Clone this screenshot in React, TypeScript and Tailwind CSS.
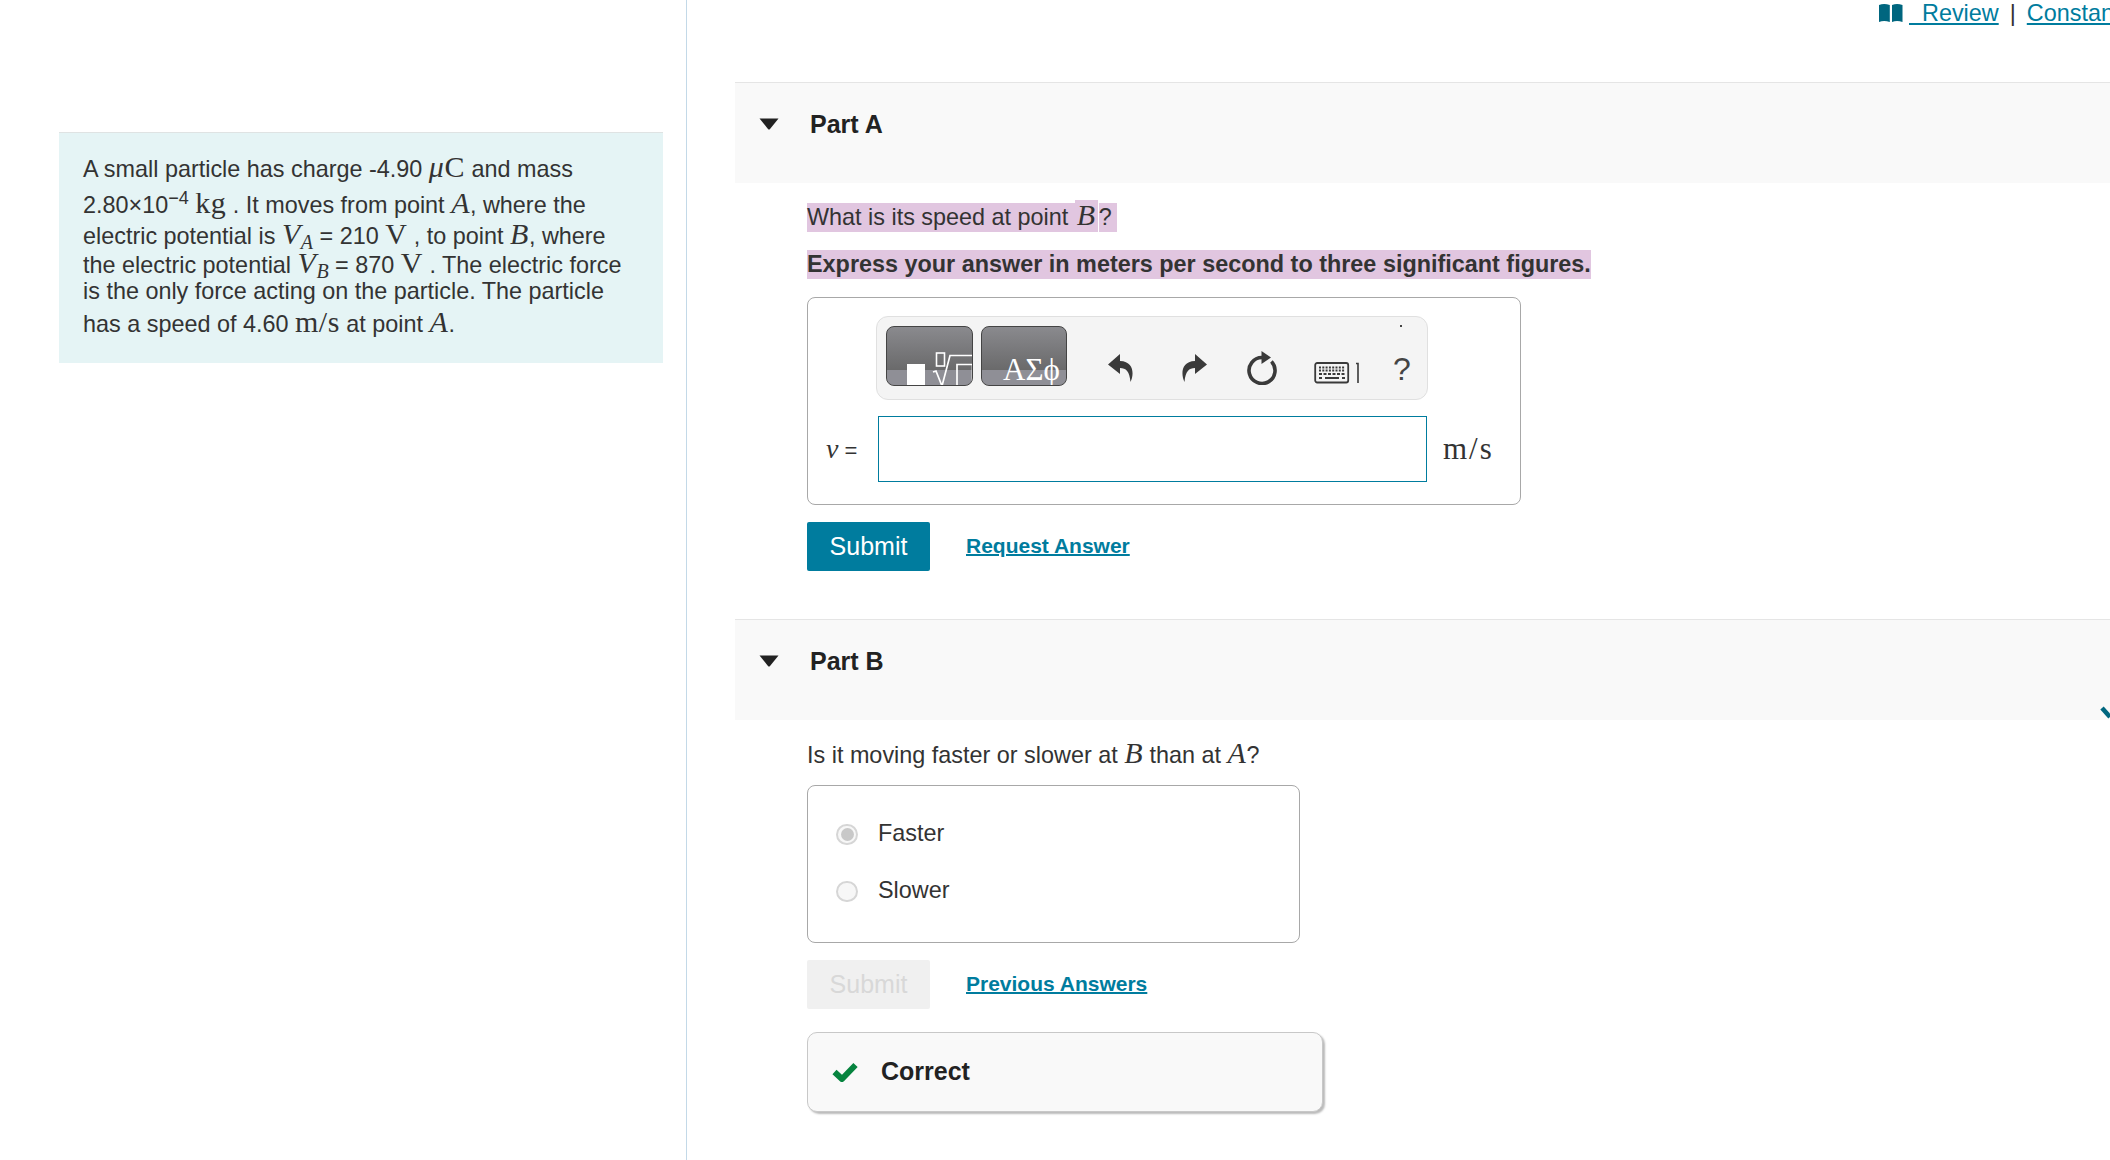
const sans = "font-['Liberation_Sans',Arial,sans-serif]";

// Math is typeset in a serif face, like the original page
const M = ({ children }: { children: React.ReactNode }) => (
  <span className="font-['Liberation_Serif',serif] italic text-[30px] leading-none tracking-[0.5px]">{children}</span>
);
const U = ({ children }: { children: React.ReactNode }) => (
  <span className="font-['Liberation_Serif',serif] text-[30px] leading-none tracking-[0.5px]">{children}</span>
);

const Triangle = () => (
  <svg width="20" height="12" viewBox="0 0 20 12" className="shrink-0">
    <path d="M0.5 0.5 H19.5 L11 11 Q10 12 9 11 Z" fill="#222" />
  </svg>
);

const PartHeader = ({ title }: { title: string }) => (
  <div className="h-[101px] bg-[#f9f9f9] border-t border-[#e5e5e5] flex items-start pl-[24px] pt-[33px] gap-[31px]">
    <div className="pt-[2px]">
      <Triangle />
    </div>
    <h2 className="text-[25px] leading-[14px] pt-[1px] font-bold text-[#222]">{title}</h2>
  </div>
);

const PaletteSymbols = () => (
  <svg width="87" height="60" viewBox="0 0 87 60" className="absolute left-0 top-0">
    <rect x="20" y="37" width="18" height="23" fill="#fff" />
    <rect x="49.5" y="26" width="8" height="13" fill="none" stroke="#fff" strokeWidth="1.6" />
    <path d="M46 45 L49 44 L55 59 L63 28.5 H87" fill="none" stroke="#fff" strokeWidth="1.7" />
    <path d="M70 60 V37.5 H85.5 V60" fill="none" stroke="#fff" strokeWidth="1.7" />
  </svg>
);

const Palette = ({ wide, children }: { wide?: boolean; children: React.ReactNode }) => (
  <div
    className={`relative h-[60px] ${wide ? "w-[87px]" : "w-[86px]"} rounded-[8px] border border-[#444] overflow-hidden bg-gradient-to-b from-[#8a8a8e] to-[#5f5f5f]`}
  >
    <div className="absolute left-0 right-0 bottom-0 h-[15px] bg-[#8f8f96]" />
    {children}
  </div>
);

const UndoIcon = ({ flip }: { flip?: boolean }) => (
  <svg width="26" height="30" viewBox="0 0 26 30" className={flip ? "-scale-x-100" : ""}>
    <path
      d="M12 1 L0 11.5 L12 21 V15 C18 15 21.5 18 22.5 29 C26 22 26.5 8.5 12 8 Z"
      fill="#3a3a3a"
    />
  </svg>
);

const ResetIcon = () => (
  <svg width="32" height="34" viewBox="0 0 32 34">
    <path d="M16 6.5 A13 13 0 1 0 25.4 10.5" fill="none" stroke="#3a3a3a" strokeWidth="3.6" />
    <path d="M15.5 0 L25 6.5 L15.5 13 Z" fill="#3a3a3a" />
  </svg>
);

const KeyboardIcon = () => (
  <svg width="48" height="24" viewBox="0 0 48 24">
    <rect x="1.2" y="2" width="33" height="19.5" rx="2" fill="#f4f4f4" stroke="#3a3a3a" strokeWidth="1.8" />
    <path
      d="M5 6.5 H31 M5 9.5 H31"
      stroke="#3a3a3a"
      strokeWidth="2"
      strokeDasharray="2 1.3"
    />
    <path d="M5 13 H31" stroke="#3a3a3a" strokeWidth="2" strokeDasharray="3 1.5" />
    <path d="M5 17 H8 M11 17 H25 M28 17 H31" stroke="#3a3a3a" strokeWidth="2" />
    <path d="M42 2.5 H44 V22" fill="none" stroke="#3a3a3a" strokeWidth="1.6" />
  </svg>
);

const Radio = ({ checked }: { checked?: boolean }) => (
  <span className="w-[22px] h-[21px] rounded-full border-2 border-[#d6d6d6] bg-[#f7f7f7] flex items-center justify-center">
    {checked && <span className="w-[13px] h-[13px] rounded-full bg-[#c8c8c8]" />}
  </span>
);

export default function App() {
  return (
    <div className={`${sans} w-[2110px] h-[1160px] overflow-hidden bg-white text-[#333] flex`}>
      {/* Intro panel */}
      <aside className="w-[687px] shrink-0 border-r border-[#c3d9e8] pl-[59px] pr-[23px] pt-[132px]">
        <div className="h-[231px] bg-[#e5f4f5] border-t border-[#dfe3e3] pl-[24px] pt-[19px] text-[23.4px] whitespace-nowrap">
          <div className="h-[36px] leading-[35px]">
            A small particle has charge -4.90 <M>μ</M><U>C</U> and mass
          </div>
          <div className="h-[31px] leading-[35px]">
            2.80×10<sup className="text-[18px] leading-none">−4</sup> <U>kg</U> . It moves from point <M>A</M>, where the
          </div>
          <div className="h-[29px] leading-[30px]">
            electric potential is <M>V</M><sub className="text-[20px] leading-none font-['Liberation_Serif',serif] italic">A</sub> = 210 <U>V</U> , to point <M>B</M>, where
          </div>
          <div className="h-[29px] leading-[30px]">
            the electric potential <M>V</M><sub className="text-[20px] leading-none font-['Liberation_Serif',serif] italic">B</sub> = 870 <U>V</U> . The electric force
          </div>
          <div className="h-[30px] leading-[29px]">is the only force acting on the particle. The particle</div>
          <div className="leading-[32px]">
            has a speed of 4.60 <U>m/s</U> at point <M>A</M>.
          </div>
        </div>
      </aside>

      {/* Parts */}
      <main className="relative flex-1 min-w-0 pl-[48px] overflow-hidden">
        <div className="h-[82px] pl-[1144px] whitespace-nowrap text-[23.4px] leading-[27px] flex items-start">
          <svg width="24" height="19" viewBox="0 0 24 19" className="mt-[3px] shrink-0" fill="#00667f">
            <path d="M0 2 Q5 0 10.8 2 V19 Q5 17 0 19 Z M13 2 Q18 0 23.5 2 V19 Q18 17 13 19 Z" />
          </svg>
          <a className="text-[#007c9e] underline ml-[6px] whitespace-pre">{"  "}Review</a>
          <span className="mx-[11px] text-[#333]">|</span>
          <a className="text-[#007c9e] underline">Constants</a>
        </div>

        <PartHeader title="Part A" />
        <section className="pl-[72px]">
          <p className="mt-[20px] h-[29px] text-[23.4px] flex items-end w-fit whitespace-pre">
            <span className="h-[29px] leading-[29px] bg-[#e1c6e0]">What is its speed at point </span>
            <span className="h-[32px] leading-[34px] bg-[#e1c6e0] px-[2px]"><M>B</M></span>
            <span className="h-[29px] leading-[29px] ml-[1px] pr-[5px] bg-[#e1c6e0]">?</span>
          </p>
          <p className="mt-[18px] h-[29px] text-[23.4px] leading-[29px] font-bold w-fit bg-[#e1c6e0] whitespace-nowrap">
            Express your answer in meters per second to three significant figures.
          </p>

          <div className="mt-[18px] w-[714px] h-[208px] rounded-[8px] border border-[#a8a8a8] pt-[18px] pl-[68px]">
            <div className="w-[552px] h-[84px] rounded-[12px] border border-[#e0e0e0] bg-[#f4f4f4] pl-[9px] pt-[9px] flex items-start relative">
              <Palette wide>
                <PaletteSymbols />
              </Palette>
              <div className="ml-[8px]">
                <Palette>
                  <span className="absolute left-[21px] top-[25px] font-['Liberation_Serif',serif] text-[31px] leading-[36px] text-white">ΑΣϕ</span>
                </Palette>
              </div>
              <div className="ml-[41px] mt-[27px]"><UndoIcon /></div>
              <div className="ml-[47px] mt-[27px]"><UndoIcon flip /></div>
              <div className="ml-[39px] mt-[25px]"><ResetIcon /></div>
              <div className="ml-[36px] mt-[35px]"><KeyboardIcon /></div>
              <span className="ml-[31px] mt-[23px] text-[32px] leading-[40px] text-[#444]">?</span>
              <span className="absolute left-[523px] top-[8px] w-[2px] h-[2px] bg-[#444]" />
            </div>
            <div className="flex items-center mt-[16px] h-[66px]">
              <span className="w-[4px] -ml-[50px] mr-[48px] whitespace-nowrap text-[22px]">
                <span className="font-['Liberation_Serif',serif] italic text-[28px]">v</span> =
              </span>
              <div className="w-[549px] h-[66px] border border-[#007c9e] bg-white" />
              <span className="ml-[16px] font-['Liberation_Serif',serif] text-[31px] tracking-[2px]">m/s</span>
            </div>
          </div>

          <div className="mt-[17px] flex items-center h-[49px]">
            <button className="w-[123px] h-[49px] rounded-[2px] bg-[#007c9e] text-white text-[25px]">Submit</button>
            <a className="ml-[36px] -mt-[2px] text-[21px] font-bold text-[#007c9e] underline decoration-[1.5px]">Request Answer</a>
          </div>
        </section>

        <div className="mt-[48px]">
          <PartHeader title="Part B" />
        </div>
        <section className="pl-[72px]">
          <p className="mt-[18px] h-[29px] text-[23.4px] leading-[29px]">
            Is it moving faster or slower at <M>B</M> than at <M>A</M>?
          </p>

          <div className="mt-[18px] w-[493px] h-[158px] rounded-[8px] border border-[#a8a8a8] pl-[28px] pt-[36px] text-[23.4px]">
            <label className="flex items-center gap-[20px] h-[24px]">
              <Radio checked />
              <span>Faster</span>
            </label>
            <label className="flex items-center gap-[20px] h-[24px] mt-[33px]">
              <Radio />
              <span>Slower</span>
            </label>
          </div>

          <div className="mt-[17px] flex items-center h-[49px]">
            <button className="w-[123px] h-[49px] rounded-[2px] bg-[#f0f0f0] text-[#d8d8d8] text-[25px]">Submit</button>
            <a className="ml-[36px] -mt-[2px] text-[21px] font-bold text-[#007c9e] underline decoration-[1.5px]">Previous Answers</a>
          </div>

          <div className="mt-[23px] w-[516px] h-[80px] rounded-[10px] border border-[#c8c8c8] bg-[#f9f9f9] shadow-[2px_2px_2px_#bbb] flex items-center pl-[24px]">
            <svg width="26" height="20" viewBox="0 0 26 20" className="shrink-0">
              <path d="M2.5 10 L10 17 L23.5 3" fill="none" stroke="#07843f" strokeWidth="6" strokeLinejoin="round" />
            </svg>
            <span className="ml-[23px] text-[25px] font-bold text-[#222]">Correct</span>
          </div>
        </section>

        {/* tab peeking in at the right edge */}
        <svg width="10" height="14" viewBox="0 0 10 14" className="absolute right-0 top-[706px]">
          <path d="M2 2 L10 11" stroke="#00667f" strokeWidth="4.5" />
        </svg>
      </main>
    </div>
  );
}
